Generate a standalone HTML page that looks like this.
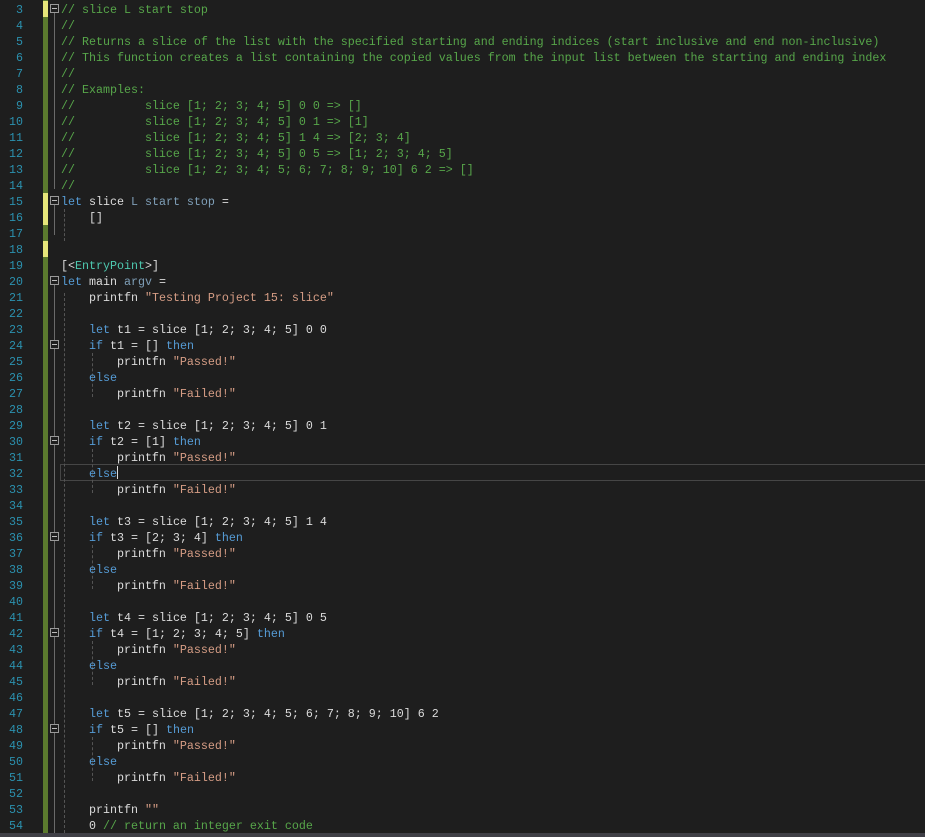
<!DOCTYPE html>
<html><head><meta charset="utf-8"><style>
body{margin:0;width:925px;height:837px;background:#1e1e1e;overflow:hidden;position:relative;font-family:"Liberation Mono",monospace;font-size:11.67px;color:#dcdcdc}
.n,.l{margin-top:1px}
.n{position:absolute;left:0;width:23px;text-align:right;color:#2b91af;line-height:16px;height:16px}
.l{position:absolute;left:61px;line-height:16px;height:16px;white-space:pre}
.c{color:#57a64a}.k{color:#569cd6}.s{color:#d69d85}.p{color:#7f9fb8}.t{color:#4ec9b0}.g{color:#9b9b9b}
.bar{position:absolute;left:43px;width:5px;height:16px;background:#e6e67a}
.fb{position:absolute;left:50px;width:7px;height:7px;border:1px solid #999;background:#1e1e1e}
.fb:after{content:"";position:absolute;left:1px;top:3px;width:5px;height:1px;background:#bbb}
.fl{position:absolute;left:54px;width:1px;background:#6a6a6a}
.dg{position:absolute;width:0;border-left:1px dashed #555}
</style></head><body>
<div style="position:absolute;left:43px;top:0;width:5px;height:833px;background:#5b7a2e"></div>
<div class="bar" style="top:1px"></div>
<div class="bar" style="top:193px;height:32px"></div>
<div class="bar" style="top:241px"></div>
<div style="position:absolute;left:0;top:833px;width:925px;height:4px;background:#3f3f46"></div>
<div style="position:absolute;left:60px;top:464px;width:865px;height:15px;border:1px solid #464646;border-right:none"></div>
<div style="position:absolute;left:117px;top:466px;width:1px;height:13px;background:#dcdcdc"></div>

<div class="fl" style="top:13px;height:176px"></div>
<div class="fl" style="top:205px;height:30px"></div>
<div class="fl" style="top:285px;height:548px"></div>
<div class="dg" style="left:64px;top:209px;height:32px"></div>
<div class="dg" style="left:64px;top:293px;height:540px"></div>
<div class="dg" style="left:92px;top:353px;height:44px"></div>
<div class="dg" style="left:92px;top:449px;height:44px"></div>
<div class="dg" style="left:92px;top:545px;height:44px"></div>
<div class="dg" style="left:92px;top:641px;height:44px"></div>
<div class="dg" style="left:92px;top:737px;height:44px"></div>

<div class="fb" style="top:4px"></div>
<div class="fb" style="top:196px"></div>
<div class="fb" style="top:276px"></div>
<div class="fb" style="top:340px"></div>
<div class="fb" style="top:436px"></div>
<div class="fb" style="top:532px"></div>
<div class="fb" style="top:628px"></div>
<div class="fb" style="top:724px"></div>

<div class="n" style="top:1px">3</div><div class="l c" style="top:1px">// slice L start stop</div>
<div class="n" style="top:17px">4</div><div class="l c" style="top:17px">//</div>
<div class="n" style="top:33px">5</div><div class="l c" style="top:33px">// Returns a slice of the list with the specified starting and ending indices (start inclusive and end non-inclusive)</div>
<div class="n" style="top:49px">6</div><div class="l c" style="top:49px">// This function creates a list containing the copied values from the input list between the starting and ending index</div>
<div class="n" style="top:65px">7</div><div class="l c" style="top:65px">//</div>
<div class="n" style="top:81px">8</div><div class="l c" style="top:81px">// Examples:</div>
<div class="n" style="top:97px">9</div><div class="l c" style="top:97px">//          slice [1; 2; 3; 4; 5] 0 0 =&gt; []</div>
<div class="n" style="top:113px">10</div><div class="l c" style="top:113px">//          slice [1; 2; 3; 4; 5] 0 1 =&gt; [1]</div>
<div class="n" style="top:129px">11</div><div class="l c" style="top:129px">//          slice [1; 2; 3; 4; 5] 1 4 =&gt; [2; 3; 4]</div>
<div class="n" style="top:145px">12</div><div class="l c" style="top:145px">//          slice [1; 2; 3; 4; 5] 0 5 =&gt; [1; 2; 3; 4; 5]</div>
<div class="n" style="top:161px">13</div><div class="l c" style="top:161px">//          slice [1; 2; 3; 4; 5; 6; 7; 8; 9; 10] 6 2 =&gt; []</div>
<div class="n" style="top:177px">14</div><div class="l c" style="top:177px">//</div>
<div class="n" style="top:193px">15</div><div class="l" style="top:193px"><span class="k">let</span> slice <span class="p">L start stop</span> =</div>
<div class="n" style="top:209px">16</div><div class="l" style="top:209px">    []</div>
<div class="n" style="top:225px">17</div>
<div class="n" style="top:241px">18</div>
<div class="n" style="top:257px">19</div><div class="l" style="top:257px">[&lt;<span class="t">EntryPoint</span>&gt;]</div>
<div class="n" style="top:273px">20</div><div class="l" style="top:273px"><span class="k">let</span> main <span class="p">argv</span> =</div>
<div class="n" style="top:289px">21</div><div class="l" style="top:289px">    printfn <span class="s">"Testing Project 15: slice"</span></div>
<div class="n" style="top:305px">22</div>
<div class="n" style="top:321px">23</div><div class="l" style="top:321px">    <span class="k">let</span> t1 = slice [1; 2; 3; 4; 5] 0 0</div>
<div class="n" style="top:337px">24</div><div class="l" style="top:337px">    <span class="k">if</span> t1 = [] <span class="k">then</span></div>
<div class="n" style="top:353px">25</div><div class="l" style="top:353px">        printfn <span class="s">"Passed!"</span></div>
<div class="n" style="top:369px">26</div><div class="l" style="top:369px">    <span class="k">else</span></div>
<div class="n" style="top:385px">27</div><div class="l" style="top:385px">        printfn <span class="s">"Failed!"</span></div>
<div class="n" style="top:401px">28</div>
<div class="n" style="top:417px">29</div><div class="l" style="top:417px">    <span class="k">let</span> t2 = slice [1; 2; 3; 4; 5] 0 1</div>
<div class="n" style="top:433px">30</div><div class="l" style="top:433px">    <span class="k">if</span> t2 = [1] <span class="k">then</span></div>
<div class="n" style="top:449px">31</div><div class="l" style="top:449px">        printfn <span class="s">"Passed!"</span></div>
<div class="n" style="top:465px">32</div><div class="l" style="top:465px">    <span class="k">else</span></div>
<div class="n" style="top:481px">33</div><div class="l" style="top:481px">        printfn <span class="s">"Failed!"</span></div>
<div class="n" style="top:497px">34</div>
<div class="n" style="top:513px">35</div><div class="l" style="top:513px">    <span class="k">let</span> t3 = slice [1; 2; 3; 4; 5] 1 4</div>
<div class="n" style="top:529px">36</div><div class="l" style="top:529px">    <span class="k">if</span> t3 = [2; 3; 4] <span class="k">then</span></div>
<div class="n" style="top:545px">37</div><div class="l" style="top:545px">        printfn <span class="s">"Passed!"</span></div>
<div class="n" style="top:561px">38</div><div class="l" style="top:561px">    <span class="k">else</span></div>
<div class="n" style="top:577px">39</div><div class="l" style="top:577px">        printfn <span class="s">"Failed!"</span></div>
<div class="n" style="top:593px">40</div>
<div class="n" style="top:609px">41</div><div class="l" style="top:609px">    <span class="k">let</span> t4 = slice [1; 2; 3; 4; 5] 0 5</div>
<div class="n" style="top:625px">42</div><div class="l" style="top:625px">    <span class="k">if</span> t4 = [1; 2; 3; 4; 5] <span class="k">then</span></div>
<div class="n" style="top:641px">43</div><div class="l" style="top:641px">        printfn <span class="s">"Passed!"</span></div>
<div class="n" style="top:657px">44</div><div class="l" style="top:657px">    <span class="k">else</span></div>
<div class="n" style="top:673px">45</div><div class="l" style="top:673px">        printfn <span class="s">"Failed!"</span></div>
<div class="n" style="top:689px">46</div>
<div class="n" style="top:705px">47</div><div class="l" style="top:705px">    <span class="k">let</span> t5 = slice [1; 2; 3; 4; 5; 6; 7; 8; 9; 10] 6 2</div>
<div class="n" style="top:721px">48</div><div class="l" style="top:721px">    <span class="k">if</span> t5 = [] <span class="k">then</span></div>
<div class="n" style="top:737px">49</div><div class="l" style="top:737px">        printfn <span class="s">"Passed!"</span></div>
<div class="n" style="top:753px">50</div><div class="l" style="top:753px">    <span class="k">else</span></div>
<div class="n" style="top:769px">51</div><div class="l" style="top:769px">        printfn <span class="s">"Failed!"</span></div>
<div class="n" style="top:785px">52</div>
<div class="n" style="top:801px">53</div><div class="l" style="top:801px">    printfn <span class="s">""</span></div>
<div class="n" style="top:817px">54</div><div class="l" style="top:817px">    0 <span class="c">// return an integer exit code</span></div>
</body></html>
